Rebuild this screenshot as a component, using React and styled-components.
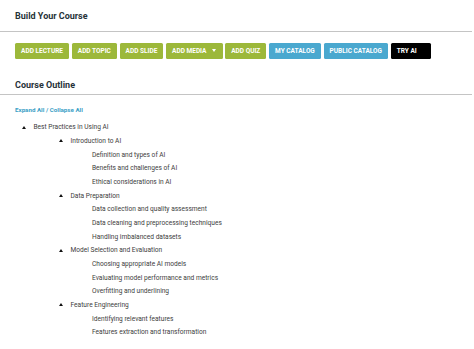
import React from 'react'
import styled, { createGlobalStyle, css } from 'styled-components'

const GlobalStyle = createGlobalStyle`
    body {
        margin: 0;
        background: #fff;
        font-family: Roboto, "Liberation Sans", sans-serif;
        color: #333;
    }
`

const Page = styled.div`
    width: 472px;
`

const Header = styled.div`
    height: 31px;
    padding-left: 15px;
    display: flex;
    align-items: center;
    border-bottom: 1.5px solid #c4c4c4;
`

const Title = styled.h1`
    margin: 0;
    font-size: 9px;
    font-weight: 700;
    color: #263238;
`

const Toolbar = styled.div`
    display: flex;
    gap: 2.6px;
    padding: 10.5px 0 0 15px;
`

const Button = styled.button`
    height: 16.5px;
    padding: 0 6.1px;
    border: none;
    border-radius: 1.5px;
    font-family: inherit;
    font-size: 6.5px;
    font-weight: 700;
    color: #fff;
    background: #9cb83a;
    display: flex;
    align-items: center;
    gap: 6px;
    ${p => p.blue && css` background: #4aa8cf; `}
    ${p => p.dark && css` background: #000; padding: 0 14px 0 6px; `}
`

const Caret = styled.span`
    width: 0;
    height: 0;
    border-left: 2.5px solid transparent;
    border-right: 2.5px solid transparent;
    border-top: 3px solid #fff;
`

const Section = styled.div`
    margin-top: 17px;
    height: 18px;
    padding-left: 15px;
    display: flex;
    align-items: center;
    border-bottom: 1.5px solid #c4c4c4;
`

const ExpandLink = styled.div`
    padding: 10.5px 0 0 15px;
    font-size: 6.2px;
    font-weight: 700;
    color: #3aa0c6;
    line-height: 8px;
`

const Tree = styled.ul`
    list-style: none;
    margin: 7px 0 0;
    padding: 0;
`

const Row = styled.li`
    display: flex;
    align-items: center;
    height: 13.67px;
    font-size: 6.6px;
    color: #3d3d3d;
    padding-left: ${p => [22, 59, 92][p.level]}px;
`

const Arrow = styled.span`
    width: 0;
    height: 0;
    margin-right: 7.5px;
    border-left: 2.4px solid transparent;
    border-right: 2.4px solid transparent;
    border-bottom: 3.6px solid #111;
`

const outline = [
    [0, 'Best Practices in Using AI'],
    [1, 'Introduction to AI'],
    [2, 'Definition and types of AI'],
    [2, 'Benefits and challenges of AI'],
    [2, 'Ethical considerations in AI'],
    [1, 'Data Preparation'],
    [2, 'Data collection and quality assessment'],
    [2, 'Data cleaning and preprocessing techniques'],
    [2, 'Handling imbalanced datasets'],
    [1, 'Model Selection and Evaluation'],
    [2, 'Choosing appropriate AI models'],
    [2, 'Evaluating model performance and metrics'],
    [2, 'Overfitting and underlining'],
    [1, 'Feature Engineering'],
    [2, 'Identifying relevant features'],
    [2, 'Features extraction and transformation'],
]

export default function App() {
    return (
        <Page>
            <GlobalStyle />
            <Header>
                <Title>Build Your Course</Title>
            </Header>
            <Toolbar>
                <Button>ADD LECTURE</Button>
                <Button>ADD TOPIC</Button>
                <Button>ADD SLIDE</Button>
                <Button>ADD MEDIA <Caret /></Button>
                <Button>ADD QUIZ</Button>
                <Button blue>MY CATALOG</Button>
                <Button blue>PUBLIC CATALOG</Button>
                <Button dark>TRY AI</Button>
            </Toolbar>
            <Section>
                <Title>Course Outline</Title>
            </Section>
            <ExpandLink>Expand All / Collapse All</ExpandLink>
            <Tree>
                {outline.map(([level, text], i) => (
                    <Row key={i} level={level}>
                        {level < 2 && <Arrow />}
                        {text}
                    </Row>
                ))}
            </Tree>
        </Page>
    )
}
